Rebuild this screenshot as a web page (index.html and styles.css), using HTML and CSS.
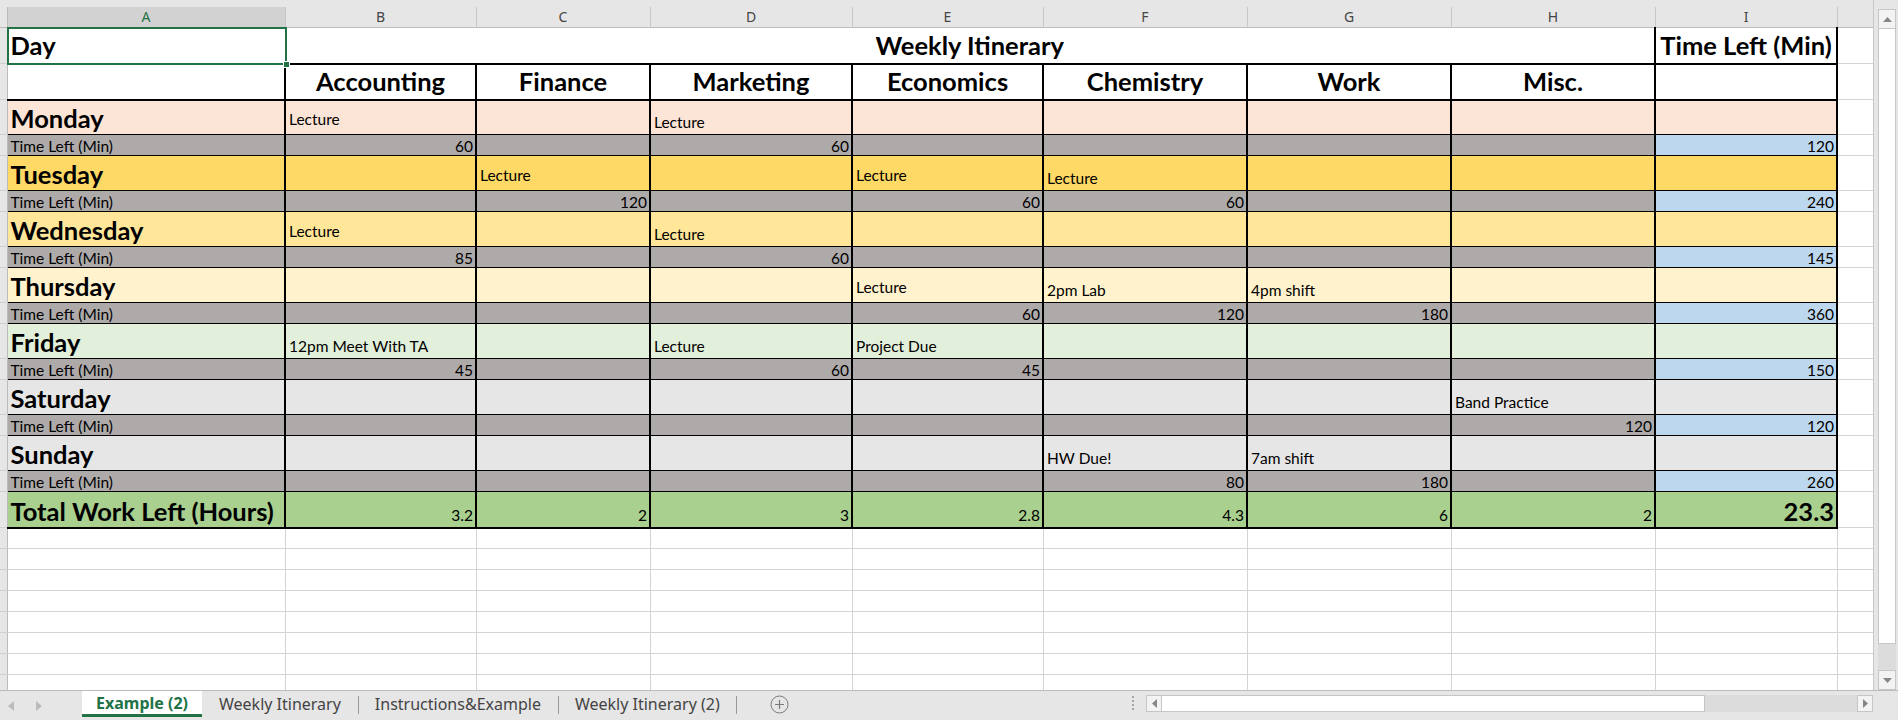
FILE: index.html
```html
<!DOCTYPE html>
<html lang="en">
<head>
    <meta charset="UTF-8">
    <title>Weekly Itinerary - Example (2)</title>
    <link rel="stylesheet" href="styles.css">
</head>
<body>
    <div class="window">
        <div class="workspace">
            <div class="sheet">
                <table class="grid">
                    <colgroup>
                        <col class="w-rh">
                        <col class="w-a"><col class="w-b"><col class="w-c"><col class="w-d"><col class="w-e">
                        <col class="w-f"><col class="w-g"><col class="w-h"><col class="w-i"><col class="w-j">
                    </colgroup>
                    <thead>
                        <tr class="letters">
                            <th class="corner"></th>
                            <th class="colh picked">A</th>
                            <th class="colh">B</th>
                            <th class="colh">C</th>
                            <th class="colh">D</th>
                            <th class="colh">E</th>
                            <th class="colh">F</th>
                            <th class="colh">G</th>
                            <th class="colh">H</th>
                            <th class="colh">I</th>
                            <th class="colh"></th>
                        </tr>
                    </thead>
                    <tbody>
                        <tr class="title">
                            <th class="rh"></th>
                            <td class="big sel">Day</td>
                            <td class="big center merged" colspan="7">Weekly Itinerary</td>
                            <td class="big center boxed">Time Left (Min)</td>
                            <td class="out"></td>
                        </tr>
                        <tr class="subjects">
                            <th class="rh"></th>
                            <td></td>
                            <td class="big center">Accounting</td>
                            <td class="big center">Finance</td>
                            <td class="big center">Marketing</td>
                            <td class="big center">Economics</td>
                            <td class="big center">Chemistry</td>
                            <td class="big center">Work</td>
                            <td class="big center">Misc.</td>
                            <td></td>
                            <td class="out"></td>
                        </tr>

                        <tr class="day mon">
                            <th class="rh"></th>
                            <td class="big">Monday</td>
                            <td class="mid">Lecture</td>
                            <td></td>
                            <td>Lecture</td>
                            <td></td><td></td><td></td><td></td><td></td>
                            <td class="out"></td>
                        </tr>
                        <tr class="tl">
                            <th class="rh"></th>
                            <td>Time Left (Min)</td>
                            <td>60</td><td></td><td>60</td><td></td><td></td><td></td><td></td>
                            <td class="sum">120</td>
                            <td class="out"></td>
                        </tr>

                        <tr class="day tue">
                            <th class="rh"></th>
                            <td class="big">Tuesday</td>
                            <td></td>
                            <td class="mid">Lecture</td>
                            <td></td>
                            <td class="mid">Lecture</td>
                            <td>Lecture</td>
                            <td></td><td></td><td></td>
                            <td class="out"></td>
                        </tr>
                        <tr class="tl">
                            <th class="rh"></th>
                            <td>Time Left (Min)</td>
                            <td></td><td>120</td><td></td><td>60</td><td>60</td><td></td><td></td>
                            <td class="sum">240</td>
                            <td class="out"></td>
                        </tr>

                        <tr class="day wed">
                            <th class="rh"></th>
                            <td class="big">Wednesday</td>
                            <td class="mid">Lecture</td>
                            <td></td>
                            <td>Lecture</td>
                            <td></td><td></td><td></td><td></td><td></td>
                            <td class="out"></td>
                        </tr>
                        <tr class="tl">
                            <th class="rh"></th>
                            <td>Time Left (Min)</td>
                            <td>85</td><td></td><td>60</td><td></td><td></td><td></td><td></td>
                            <td class="sum">145</td>
                            <td class="out"></td>
                        </tr>

                        <tr class="day thu">
                            <th class="rh"></th>
                            <td class="big">Thursday</td>
                            <td></td><td></td><td></td>
                            <td class="mid">Lecture</td>
                            <td>2pm Lab</td>
                            <td>4pm shift</td>
                            <td></td><td></td>
                            <td class="out"></td>
                        </tr>
                        <tr class="tl">
                            <th class="rh"></th>
                            <td>Time Left (Min)</td>
                            <td></td><td></td><td></td><td>60</td><td>120</td><td>180</td><td></td>
                            <td class="sum">360</td>
                            <td class="out"></td>
                        </tr>

                        <tr class="day fri">
                            <th class="rh"></th>
                            <td class="big">Friday</td>
                            <td>12pm Meet With TA</td>
                            <td></td>
                            <td>Lecture</td>
                            <td>Project Due</td>
                            <td></td><td></td><td></td><td></td>
                            <td class="out"></td>
                        </tr>
                        <tr class="tl">
                            <th class="rh"></th>
                            <td>Time Left (Min)</td>
                            <td>45</td><td></td><td>60</td><td>45</td><td></td><td></td><td></td>
                            <td class="sum">150</td>
                            <td class="out"></td>
                        </tr>

                        <tr class="day sat">
                            <th class="rh"></th>
                            <td class="big">Saturday</td>
                            <td></td><td></td><td></td><td></td><td></td><td></td>
                            <td>Band Practice</td>
                            <td></td>
                            <td class="out"></td>
                        </tr>
                        <tr class="tl">
                            <th class="rh"></th>
                            <td>Time Left (Min)</td>
                            <td></td><td></td><td></td><td></td><td></td><td></td><td>120</td>
                            <td class="sum">120</td>
                            <td class="out"></td>
                        </tr>

                        <tr class="day sun">
                            <th class="rh"></th>
                            <td class="big">Sunday</td>
                            <td></td><td></td><td></td><td></td>
                            <td>HW Due!</td>
                            <td>7am shift</td>
                            <td></td><td></td>
                            <td class="out"></td>
                        </tr>
                        <tr class="tl">
                            <th class="rh"></th>
                            <td>Time Left (Min)</td>
                            <td></td><td></td><td></td><td></td><td>80</td><td>180</td><td></td>
                            <td class="sum">260</td>
                            <td class="out"></td>
                        </tr>

                        <tr class="total">
                            <th class="rh"></th>
                            <td class="big">Total Work Left (Hours)</td>
                            <td>3.2</td><td>2</td><td>3</td><td>2.8</td><td>4.3</td><td>6</td><td>2</td>
                            <td class="big">23.3</td>
                            <td class="out"></td>
                        </tr>

                        <tr class="blank"><th class="rh"></th><td></td><td></td><td></td><td></td><td></td><td></td><td></td><td></td><td></td><td></td></tr>
                        <tr class="blank"><th class="rh"></th><td></td><td></td><td></td><td></td><td></td><td></td><td></td><td></td><td></td><td></td></tr>
                        <tr class="blank"><th class="rh"></th><td></td><td></td><td></td><td></td><td></td><td></td><td></td><td></td><td></td><td></td></tr>
                        <tr class="blank"><th class="rh"></th><td></td><td></td><td></td><td></td><td></td><td></td><td></td><td></td><td></td><td></td></tr>
                        <tr class="blank"><th class="rh"></th><td></td><td></td><td></td><td></td><td></td><td></td><td></td><td></td><td></td><td></td></tr>
                        <tr class="blank"><th class="rh"></th><td></td><td></td><td></td><td></td><td></td><td></td><td></td><td></td><td></td><td></td></tr>
                        <tr class="blank"><th class="rh"></th><td></td><td></td><td></td><td></td><td></td><td></td><td></td><td></td><td></td><td></td></tr>
                        <tr class="blank"><th class="rh"></th><td></td><td></td><td></td><td></td><td></td><td></td><td></td><td></td><td></td><td></td></tr>
                    </tbody>
                </table>
            </div>

            <div class="vscroll">
                <div class="sb-btn">
                    <svg width="9" height="5" viewBox="0 0 9 5"><path d="M0 5 L4.5 0 L9 5 Z" fill="#868686"/></svg>
                </div>
                <div class="sb-thumb"></div>
                <div class="sb-track"></div>
                <div class="sb-btn">
                    <svg width="9" height="5" viewBox="0 0 9 5"><path d="M0 0 L4.5 5 L9 0 Z" fill="#868686"/></svg>
                </div>
            </div>
        </div>

        <div class="tabbar">
            <div class="tabnav">
                <svg width="6" height="10" viewBox="0 0 6 10"><path d="M6 0 L0 5 L6 10 Z" fill="#bcbcbc"/></svg>
                <svg width="6" height="10" viewBox="0 0 6 10"><path d="M0 0 L6 5 L0 10 Z" fill="#bcbcbc"/></svg>
            </div>
            <div class="tabs">
                <div class="tab active">Example (2)</div>
                <div class="tab">Weekly Itinerary</div>
                <div class="tab">Instructions&amp;Example</div>
                <div class="tab last">Weekly Itinerary (2)</div>
                <div class="addsheet">
                    <svg width="19" height="19" viewBox="0 0 19 19">
                        <circle cx="9.5" cy="9.5" r="8.5" fill="none" stroke="#7a7a7a" stroke-width="1"/>
                        <path d="M9.5 5 V14 M5 9.5 H14" stroke="#7a7a7a" stroke-width="1.2"/>
                    </svg>
                </div>
            </div>
            <div class="hscroll">
                <div class="grip">
                    <svg width="3" height="15" viewBox="0 0 3 15">
                        <rect x="0" y="0" width="2" height="2" fill="#a6a6a6"/>
                        <rect x="0" y="4" width="2" height="2" fill="#a6a6a6"/>
                        <rect x="0" y="8" width="2" height="2" fill="#a6a6a6"/>
                        <rect x="0" y="12" width="2" height="2" fill="#a6a6a6"/>
                    </svg>
                </div>
                <div class="hs-btn">
                    <svg width="5" height="9" viewBox="0 0 5 9"><path d="M5 0 L0 4.5 L5 9 Z" fill="#868686"/></svg>
                </div>
                <div class="hs-thumb"></div>
                <div class="hs-track"></div>
                <div class="hs-btn">
                    <svg width="5" height="9" viewBox="0 0 5 9"><path d="M0 0 L5 4.5 L0 9 Z" fill="#868686"/></svg>
                </div>
            </div>
        </div>
    </div>
</body>
</html>
```

FILE: styles.css
```css
body {
    margin: 0;
    width: 1898px;
    height: 720px;
    overflow: hidden;
    background: #e6e6e6;
    font-family: "Lato", "Liberation Sans", sans-serif;
    color: #000;
}

.window {
    display: flex;
    flex-direction: column;
    height: 720px;
}

.workspace {
    display: flex;
    height: 690px;
}

/* ---------- sheet grid ---------- */

.sheet {
    width: 1873px;
    height: 690px;
    padding-top: 7px;
    box-sizing: border-box;
    overflow: hidden;
    background: #e6e6e6;
}

.grid {
    width: 1873px;
    table-layout: fixed;
    border-collapse: collapse;
    background: #fff;
}

.w-rh { width: 7px; }
.w-a { width: 278px; }
.w-b { width: 191px; }
.w-c { width: 174px; }
.w-d { width: 202px; }
.w-e { width: 191px; }
.w-f { width: 204px; }
.w-g { width: 204px; }
.w-h { width: 204px; }
.w-i { width: 182px; }
.w-j { width: 36px; }

.letters th {
    height: 20px;
    padding: 0;
    background: #e6e6e6;
    border-right: 1px solid #c8c8c8;
    border-bottom: 1px solid #bcbcbc;
    font-family: "Noto Sans", "Open Sans", sans-serif;
    font-size: 14px;
    font-weight: normal;
    color: #444;
    text-align: center;
    line-height: 18px;
}

.letters th.corner {
    border-right: 1px solid #bcbcbc;
}

.letters th.picked {
    background: #d2d2d2;
    color: #217346;
}

.rh {
    padding: 0;
    background: #e6e6e6;
    border-right: 1px solid #bcbcbc;
    border-bottom: 1px solid #d0d0d0;
}

.grid td {
    padding: 0 3px 3px;
    border: 1px solid #d4d4d4;
    font-size: 15.5px;
    line-height: 18px;
    white-space: nowrap;
    vertical-align: bottom;
}

.grid td.big {
    font-size: 25.5px;
    font-weight: 700;
    line-height: 29px;
    padding-bottom: 1px;
}

.title td.big,
.subjects td.big {
    padding-bottom: 3px;
}

.grid td.mid {
    padding-bottom: 6px;
}

.center {
    text-align: center;
}

.title { height: 36px; }
.subjects { height: 36px; }
.day { height: 35px; }
.tl { height: 21px; }
.total { height: 36px; }
.blank { height: 21px; }

/* selected cell A1 */
.grid td.sel {
    position: relative;
}

.grid td.sel::before {
    content: "";
    position: absolute;
    left: -1px;
    top: -1px;
    right: -2px;
    bottom: -2px;
    border: 2px solid #217346;
    z-index: 2;
}

.grid td.sel::after {
    content: "";
    position: absolute;
    right: -5px;
    bottom: -5px;
    width: 5px;
    height: 5px;
    background: #217346;
    border: 1px solid #fff;
    z-index: 3;
}

.grid td.merged {
    border-bottom: 2px solid #000;
}

.grid td.boxed {
    border-left: 2px solid #000;
    border-right: 2px solid #000;
    border-bottom: 2px solid #000;
}

/* formatted area */
.subjects td {
    border-top: 2px solid #000;
    border-bottom: 2px solid #000;
}

.subjects td:nth-of-type(1) {
    border-top: 1px solid #d4d4d4;
}

.subjects td:nth-of-type(n+2),
.day td:nth-of-type(n+2),
.tl td:nth-of-type(n+2),
.total td:nth-of-type(n+2) {
    border-left: 2px solid #000;
}

.day td,
.tl td,
.total td {
    border-top: 1px solid #000;
    border-bottom: 1px solid #000;
}

.total td {
    border-bottom: 2px solid #000;
}

.tl td {
    padding-bottom: 0;
}

.tl td:nth-of-type(n+2),
.total td:nth-of-type(n+2) {
    text-align: right;
    padding-right: 2px;
}

.mon td { background: #fce4d6; }
.tue td { background: #ffd966; }
.wed td { background: #ffe699; }
.thu td { background: #fff2cc; }
.fri td { background: #e2efda; }
.sat td,
.sun td { background: #e7e6e6; }
.tl td { background: #aeaaaa; }
.tl td.sum { background: #bdd7ee; }
.total td { background: #a9d08e; }

.grid td.out {
    background: #fff;
    border-top: 1px solid #d4d4d4;
    border-bottom: 1px solid #d4d4d4;
    border-right: 1px solid #d4d4d4;
}

/* ---------- vertical scrollbar ---------- */

.vscroll {
    width: 25px;
    height: 690px;
    padding: 9px 2px 0 4px;
    box-sizing: border-box;
    display: flex;
    flex-direction: column;
    border-left: 1px solid #c8c8c8;
}

.sb-btn {
    height: 18px;
    background: #f3f3f3;
    border: 1px solid #c6c6c6;
    display: flex;
    align-items: center;
    justify-content: center;
}

.sb-thumb {
    height: 614px;
    background: #fff;
    border: 1px solid #c6c6c6;
    border-top: none;
}

.sb-track {
    flex: 1;
    background: #dcdcdc;
}

/* ---------- sheet tabs ---------- */

.tabbar {
    height: 30px;
    display: flex;
    align-items: stretch;
    border-top: 1px solid #bcbcbc;
    box-sizing: border-box;
    background: #e6e6e6;
    font-family: "Noto Sans", "Open Sans", sans-serif;
    font-size: 16px;
    color: #444;
}

.tabnav {
    width: 82px;
    display: flex;
    align-items: center;
    gap: 22px;
    padding-left: 8px;
    box-sizing: border-box;
}

.tabs {
    display: flex;
    align-items: stretch;
}

.tab {
    position: relative;
    display: flex;
    align-items: center;
    padding: 0 17px 3px;
    white-space: nowrap;
}

.tab + .tab::before {
    content: "";
    position: absolute;
    left: 0;
    top: 5px;
    bottom: 6px;
    border-left: 1px solid #9a9a9a;
}

.tab.active + .tab::before {
    display: none;
}

.tab.active {
    background: #fff;
    color: #217346;
    font-weight: 700;
    padding: 0 14px 0;
    border-bottom: 3px solid #217346;
    margin-bottom: 3px;
}

.tab.last::after {
    content: "";
    position: absolute;
    right: 0;
    top: 5px;
    bottom: 6px;
    border-left: 1px solid #9a9a9a;
}

.addsheet {
    display: flex;
    align-items: center;
    padding: 0 0 3px 33px;
}

.hscroll {
    margin-left: auto;
    margin-right: 25px;
    width: 753px;
    display: flex;
    align-items: center;
    padding-bottom: 4px;
}

.grip {
    width: 26px;
    display: flex;
    justify-content: center;
}

.hs-btn {
    width: 16px;
    height: 17px;
    background: #f3f3f3;
    border: 1px solid #c6c6c6;
    box-sizing: border-box;
    display: flex;
    align-items: center;
    justify-content: center;
}

.hs-thumb {
    width: 543px;
    height: 17px;
    background: #fff;
    border: 1px solid #c6c6c6;
    border-left: none;
    box-sizing: border-box;
}

.hs-track {
    flex: 1;
    height: 17px;
    background: #dcdcdc;
}
```
